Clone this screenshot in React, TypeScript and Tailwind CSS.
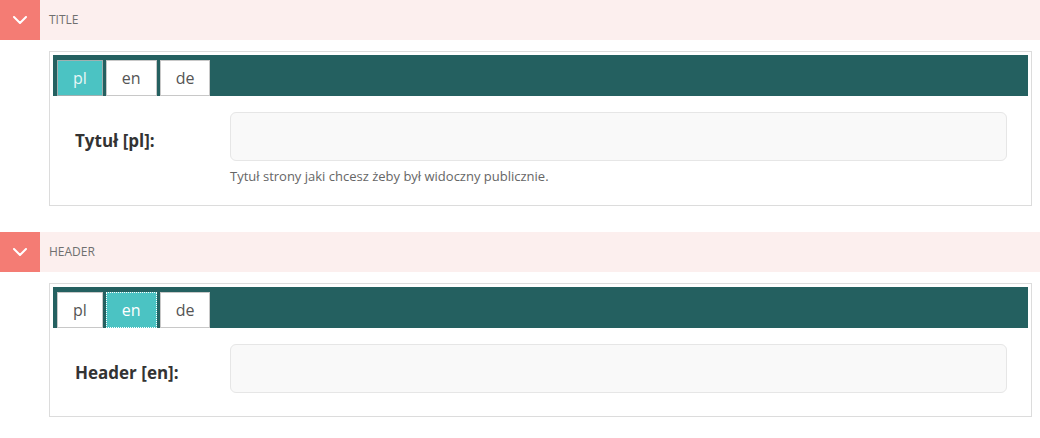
import { useState } from "react";

type Lang = "pl" | "en" | "de";

const langs: Lang[] = ["pl", "en", "de"];

function Chevron() {
  return (
    <svg width="14" height="8" viewBox="0 0 14 8" fill="none">
      <polyline points="1,1 7,7 13,1" stroke="#ffffff" strokeWidth="2" strokeLinecap="round" strokeLinejoin="round" />
    </svg>
  );
}

function Section({
  title,
  label,
  initial,
  focused,
  help,
}: {
  title: string;
  label: string;
  initial: Lang;
  focused?: boolean;
  help?: string;
}) {
  const [active, setActive] = useState<Lang>(initial);

  return (
    <div>
      <div className="flex h-[40px] items-center bg-[#fcefee]">
        <button className="flex h-[40px] w-[40px] items-center justify-center bg-[#f47c74]">
          <Chevron />
        </button>
        <span className="ml-[9px] text-[12px] uppercase text-[#6f6f6f]">{title}</span>
      </div>

      <div className="ml-[49px] mr-[8px] mt-[11px] border border-[#dcdcdc] bg-white p-[3px] pb-0">
        <div className="flex h-[41px] items-end gap-[3px] bg-[#246060] pl-[4px]">
          {langs.map((l) => {
            const on = l === active;
            return (
              <button
                key={l}
                onClick={() => setActive(l)}
                className={
                  on
                    ? focused
                      ? "flex h-[36px] items-center border border-dotted border-white bg-[#4bc3c3] px-[15px] text-[16px] text-white"
                      : "flex h-[36px] items-center border border-[#9fb0b0] bg-[#4bc3c3] px-[15px] text-[16px] text-[#e8f6f6]"
                    : "flex h-[36px] items-center border border-[#c8c8c8] bg-white px-[15px] text-[16px] text-[#555555]"
                }
              >
                {l}
              </button>
            );
          })}
        </div>

        <div className="flex pb-[23px] pr-[21px] pt-[16px]">
          <label className="w-[177px] shrink-0 pl-[22px] pt-[17px] text-[17px] font-bold leading-[24px] text-[#333333]">
            {label}
          </label>
          <div className="flex-1">
            <input
              type="text"
              className="block h-[49px] w-full rounded-[6px] border border-[#e6e6e6] bg-[#f9f9f9] px-3 text-[14px] outline-none"
            />
            {help && (
              <p className="mb-[-3px] mt-[6px] text-[13px] leading-[18px] text-[#666666]">{help}</p>
            )}
          </div>
        </div>
      </div>
    </div>
  );
}

export default function App() {
  return (
    <div
      className="h-[438px] w-[1040px] overflow-hidden bg-white"
      style={{ fontFamily: '"Open Sans", "Noto Sans", sans-serif' }}
    >
      <Section
        title="Title"
        label="Tytuł [pl]:"
        initial="pl"
        help="Tytuł strony jaki chcesz żeby był widoczny publicznie."
      />
      <div className="h-[26px]" />
      <Section title="Header" label="Header [en]:" initial="en" focused />
    </div>
  );
}
